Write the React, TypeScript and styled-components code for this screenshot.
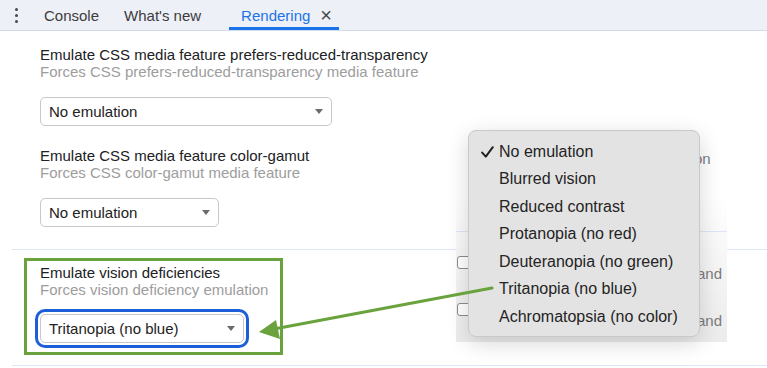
import styled, { createGlobalStyle } from 'styled-components';

const GlobalStyle = createGlobalStyle`
    html, body {
        margin: 0;
        padding: 0;
        background: #ffffff;
        font-family: "Liberation Sans", Arial, sans-serif;
    }
`;

const visionOptions = [
    'No emulation',
    'Blurred vision',
    'Reduced contrast',
    'Protanopia (no red)',
    'Deuteranopia (no green)',
    'Tritanopia (no blue)',
    'Achromatopsia (no color)',
];

const App = () => {
    return (
        <>
        <GlobalStyle />
        <Page>
            <TabBar>
                <Kebab>
                    <span /><span /><span />
                </Kebab>
                <Tab>Console</Tab>
                <Tab>What's new</Tab>
                <Tab $active>
                    Rendering
                    <Close>×</Close>
                </Tab>
            </TabBar>

            <Content>
                <Setting>
                    <Title>Emulate CSS media feature prefers-reduced-transparency</Title>
                    <Subtitle>Forces CSS prefers-reduced-transparency media feature</Subtitle>
                    <SelectBox $width={292}>
                        No emulation
                        <Caret />
                    </SelectBox>
                </Setting>

                <Setting>
                    <Title>Emulate CSS media feature color-gamut</Title>
                    <Subtitle>Forces CSS color-gamut media feature</Subtitle>
                    <SelectBox $width={179}>
                        No emulation
                        <Caret />
                    </SelectBox>
                </Setting>

                <Divider />

                <Highlight>
                    <Title>Emulate vision deficiencies</Title>
                    <Subtitle>Forces vision deficiency emulation</Subtitle>
                    <SelectBox $width={204} $focused>
                        Tritanopia (no blue)
                        <Caret />
                    </SelectBox>
                </Highlight>

                <Divider />
            </Content>

            <Snapshot>
                <GhostText>on</GhostText>
                <SnapshotDivider />
                <GhostRow>
                    <Checkbox />
                    <GhostLabel>and</GhostLabel>
                </GhostRow>
                <GhostRow>
                    <Checkbox />
                    <GhostLabel>and</GhostLabel>
                </GhostRow>

                <Menu>
                    {visionOptions.map((option, i) => (
                        <MenuItem key={option}>
                            <Check>
                                {i === 0 && (
                                    <svg width="13" height="12" viewBox="0 0 13 12">
                                        <polyline points="1.2,6.6 4.8,10.6 11.8,1.2" fill="none" stroke="#1f1f1f" strokeWidth="2" strokeLinecap="round" strokeLinejoin="round" />
                                    </svg>
                                )}
                            </Check>
                            {option}
                        </MenuItem>
                    ))}
                </Menu>
            </Snapshot>

            <ArrowLayer width="767" height="368" viewBox="0 0 767 368">
                <line x1="492" y1="288" x2="274" y2="329" stroke="#6aa23d" strokeWidth="3" strokeLinecap="round" />
                <polygon points="259,332 276,320 280,339" fill="#6aa23d" />
            </ArrowLayer>
        </Page>
        </>
    );
};

const Page = styled.div`
    position: relative;
    width: 767px;
    height: 368px;
    overflow: hidden;
    background: #ffffff;
`;

const TabBar = styled.div`
    display: flex;
    align-items: stretch;
    height: 30px;
    background: #edf0f7;
    border-bottom: 1px solid #d3dcec;
`;

const Kebab = styled.div`
    width: 32px;
    display: flex;
    flex-direction: column;
    align-items: center;
    justify-content: center;
    gap: 3px;

    span {
        width: 3px;
        height: 3px;
        border-radius: 50%;
        background: #474747;
    }
`;

const Tab = styled.div<{ $active?: boolean }>`
    display: flex;
    align-items: center;
    padding: 0 12px;
    margin-right: ${p => (p.$active ? '0' : '1px')};
    margin-left: ${p => (p.$active ? '15px' : '0')};
    font-size: 15px;
    color: ${p => (p.$active ? '#1a73e8' : '#3c3c3c')};
    box-shadow: ${p => (p.$active ? 'inset 0 -3px 0 #1a73e8' : 'none')};
`;

const Close = styled.span`
    margin-left: 10px;
    margin-right: -5px;
    font-size: 20px;
    line-height: 1;
    color: #474747;
`;

const Content = styled.div`
    padding-top: 15px;
`;

const Setting = styled.section`
    padding-left: 40px;
    margin-bottom: 21px;

    & + hr {
        margin-top: 22px;
    }
`;

const Title = styled.div`
    font-size: 15px;
    line-height: 17px;
    color: #202124;
`;

const Subtitle = styled.div`
    font-size: 15px;
    line-height: 17px;
    color: #9d9d9d;
`;

const SelectBox = styled.div<{ $width: number; $focused?: boolean }>`
    display: flex;
    align-items: center;
    justify-content: space-between;
    box-sizing: border-box;
    width: ${p => p.$width}px;
    height: 29px;
    margin-top: 17px;
    padding: 0 8px 0 8px;
    border: 1px solid #c8c8c8;
    border-radius: 5px;
    background: #ffffff;
    font-size: 15px;
    color: #222222;
    box-shadow: ${p => (p.$focused ? '0 0 0 2px #ffffff, 0 0 0 5px #1c5fd8' : 'none')};
`;

const Caret = styled.span`
    width: 0;
    height: 0;
    border-left: 4.5px solid transparent;
    border-right: 4.5px solid transparent;
    border-top: 5px solid #6b6b6b;
`;

const Divider = styled.hr`
    margin: 0 0 0 12px;
    border: none;
    border-top: 1px solid #dde6f6;
`;

const Highlight = styled.section`
    box-sizing: border-box;
    width: 259px;
    margin: 8px 0 10px 24px;
    padding: 3px 0 9px 13px;
    border: 3px solid #6aa23d;

    ${SelectBox} {
        margin-top: 16px;
    }
`;

const Snapshot = styled.div`
    position: absolute;
    left: 456px;
    top: 118px;
    width: 271px;
    height: 224px;
    background: linear-gradient(to bottom, #ffffff 0%, #ffffff 35%, #f1f1f1 80%, #ececec 100%);
`;

const GhostText = styled.div`
    padding: 32px 0 0 238px;
    font-size: 15px;
    line-height: 17px;
    color: #7c7c7c;
`;

const SnapshotDivider = styled.div`
    margin-top: 64px;
    border-top: 1px solid #dde6f6;
`;

const GhostRow = styled.div`
    display: flex;
    align-items: flex-start;
    height: 47px;
    padding-top: 24px;
    box-sizing: border-box;

    &:first-of-type {
        height: 46px;
    }
`;

const Checkbox = styled.span`
    box-sizing: border-box;
    width: 14px;
    height: 13px;
    margin-left: 1px;
    border: 1px solid #8c8c8c;
    border-radius: 3px;
    background: #ffffff;
`;

const GhostLabel = styled.span`
    margin-left: auto;
    margin-right: 5px;
    margin-top: 9px;
    font-size: 15px;
    line-height: 17px;
    color: #7c7c7c;
`;

const Menu = styled.div`
    position: absolute;
    left: 12px;
    top: 12px;
    box-sizing: border-box;
    width: 232px;
    height: 207px;
    padding: 7px 0;
    background: #e3e3e3;
    border: 1px solid #c9c9c9;
    border-radius: 8px;
    box-shadow: 0 6px 22px rgba(0, 0, 0, 0.16);
`;

const MenuItem = styled.div`
    display: flex;
    align-items: center;
    height: 27.5px;
    padding-left: 12px;
    font-size: 16px;
    color: #242424;
`;

const Check = styled.span`
    display: flex;
    align-items: center;
    width: 18px;
`;

const ArrowLayer = styled.svg`
    position: absolute;
    left: 0;
    top: 0;
    pointer-events: none;
`;

export default App;
